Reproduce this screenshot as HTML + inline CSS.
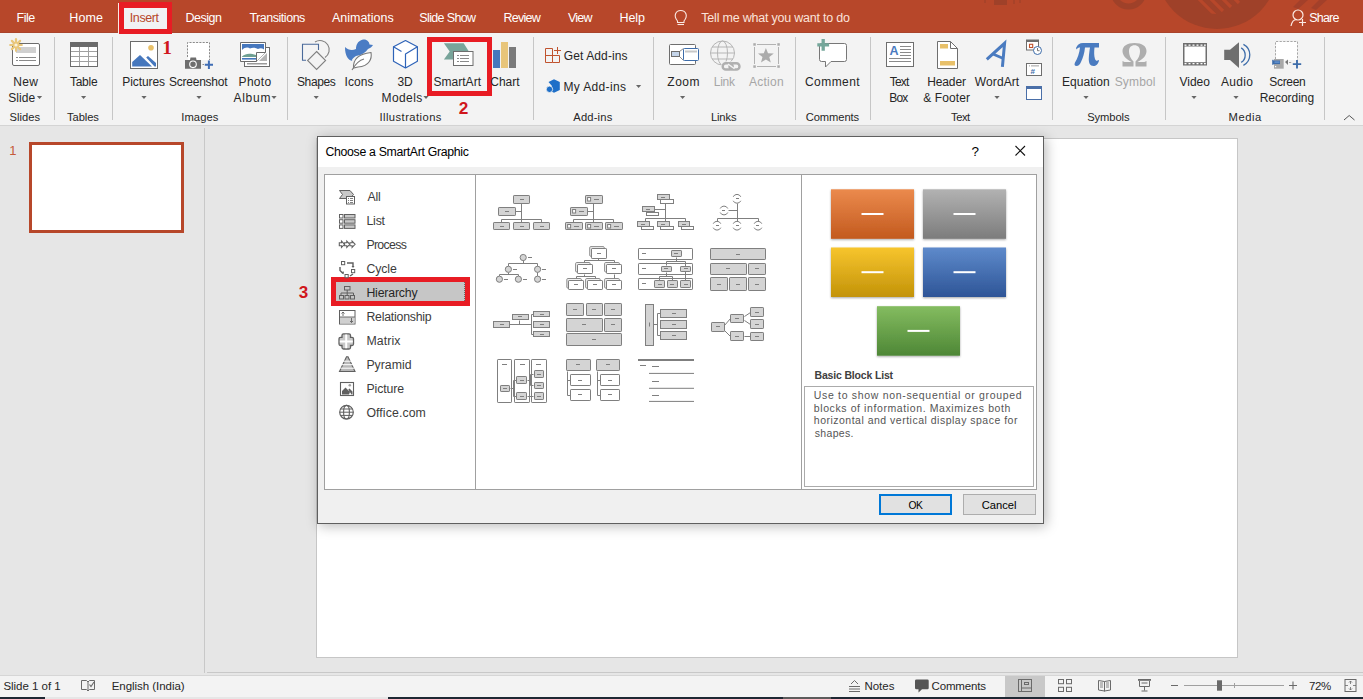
<!DOCTYPE html>
<html><head><meta charset="utf-8">
<style>
*{margin:0;padding:0;box-sizing:border-box}
html,body{width:1363px;height:699px;overflow:hidden;background:#E6E6E6;font-family:"Liberation Sans",sans-serif;position:relative}
.a{position:absolute}
.tx{position:absolute;white-space:nowrap;line-height:normal;font-family:"Liberation Sans",sans-serif}
</style></head><body>
<!-- base layers -->
<div class="a" style="left:0;top:0;width:1363px;height:33px;background:#B7472A;border-bottom:1px solid #A9432B"></div>
<div class="a" style="left:0;top:33px;width:1363px;height:92px;background:#F3F3F3"></div>
<div class="a" style="left:0;top:125px;width:1363px;height:1px;background:#D4D4D4"></div>
<!-- Insert tab highlight -->
<div class="a" style="left:119px;top:2px;width:53px;height:32px;background:#E81C24"></div>
<div class="a" style="left:124px;top:8px;width:43px;height:21px;background:#F1F2F4"></div>
<!-- SmartArt red box -->
<div class="a" style="left:427px;top:37px;width:65px;height:59px;border:5px solid #E81C24"></div>
<!-- separators -->
<div class="a" style="left:54px;top:37px;width:1px;height:83px;background:#C6C6C6"></div>
<div class="a" style="left:112px;top:37px;width:1px;height:83px;background:#C6C6C6"></div>
<div class="a" style="left:287px;top:37px;width:1px;height:83px;background:#C6C6C6"></div>
<div class="a" style="left:533px;top:37px;width:1px;height:83px;background:#C6C6C6"></div>
<div class="a" style="left:653px;top:37px;width:1px;height:83px;background:#C6C6C6"></div>
<div class="a" style="left:795px;top:37px;width:1px;height:83px;background:#C6C6C6"></div>
<div class="a" style="left:870px;top:37px;width:1px;height:83px;background:#C6C6C6"></div>
<div class="a" style="left:1052px;top:37px;width:1px;height:83px;background:#C6C6C6"></div>
<div class="a" style="left:1165px;top:37px;width:1px;height:83px;background:#C6C6C6"></div>
<div class="a" style="left:1324px;top:37px;width:1px;height:83px;background:#C6C6C6"></div>
<svg class="a" style="left:0;top:0" width="1363" height="125" viewBox="0 0 1363 125">
<!-- title pattern -->
<defs><clipPath id="ic"><circle cx="1217" cy="-32" r="46"/></clipPath></defs>
<circle cx="1217" cy="-32" r="61" fill="#9F4129"/>
<g clip-path="url(#ic)" stroke="#B7472A" stroke-width="3.2">
<line x1="1160" y1="-40" x2="1215" y2="15"/><line x1="1168" y1="-44" x2="1223" y2="11"/><line x1="1176" y1="-48" x2="1231" y2="7"/><line x1="1184" y1="-52" x2="1239" y2="3"/><line x1="1192" y1="-56" x2="1247" y2="-1"/><line x1="1200" y1="-60" x2="1255" y2="-5"/>
</g>
<circle cx="1128.5" cy="-8.5" r="15" fill="none" stroke="#9F4129" stroke-width="6"/>
<g fill="#9F4129"><rect x="994" y="0" width="13" height="5"/><rect x="984" y="0" width="2" height="3" opacity="0.6"/><rect x="1013" y="0" width="2" height="4" opacity="0.6"/><rect x="1019" y="0" width="2" height="3" opacity="0.6"/></g>
<path d="M1302 -2 L1308 0 L1298 9 L1293 7 Z" fill="#A3402A"/>
<path d="M1321 -2 L1327 0 L1316 10 L1311 8 Z" fill="#A3402A"/>
<!-- tab left white line -->
<rect x="118" y="3" width="1" height="30" fill="#F8E8E2"/>
<!-- bulb -->
<g fill="none" stroke="#FBE9E3" stroke-width="1.1">
<path d="M677.5 21 C675 18 675 15.5 675.5 14 C676.5 11 679 10.5 680.7 10.5 C682.5 10.5 685 11 686 14 C686.5 15.5 686.5 18 684 21 L684 22.5 L677.5 22.5 Z"/>
<line x1="677.5" y1="24.5" x2="684" y2="24.5"/>
</g>
<!-- share icon -->
<g fill="none" stroke="#FBE9E3" stroke-width="1.2">
<circle cx="1298" cy="15" r="5"/>
<path d="M1291 26 C1292 21 1294.5 19.5 1296.5 19.5"/>
<path d="M1302.5 19 L1302.5 26 M1299 22.5 L1306 22.5"/>
</g>

<!-- New slide -->
<g>
<rect x="12.5" y="43.5" width="27" height="22" rx="1.5" fill="#fff" stroke="#6B6B6B" stroke-width="1"/>
<rect x="16" y="47" width="20" height="6" fill="#D0D0D0"/>
<rect x="16" y="57" width="2" height="1" fill="#8A8A8A"/><rect x="19" y="57" width="17" height="1" fill="#8A8A8A"/>
<rect x="16" y="60" width="2" height="1" fill="#8A8A8A"/><rect x="19" y="60" width="17" height="1" fill="#8A8A8A"/>
<g stroke="#E9C77B" stroke-width="2.2" stroke-linecap="round">
<line x1="16" y1="39.2" x2="16" y2="50.8"/><line x1="10.2" y1="45" x2="21.8" y2="45"/><line x1="11.9" y1="40.9" x2="20.1" y2="49.1"/><line x1="20.1" y1="40.9" x2="11.9" y2="49.1"/>
</g>
<circle cx="16" cy="45" r="3" fill="#E9C77B"/>
<circle cx="16" cy="45" r="1.6" fill="#FBF3DE"/>
</g>
<!-- Table -->
<g>
<rect x="70.5" y="42.5" width="27" height="24" fill="#fff" stroke="#6B6B6B"/>
<rect x="70" y="42" width="28" height="5" fill="#6B6B6B"/>
<g stroke="#A0A0A0" stroke-width="1"><line x1="79.5" y1="47" x2="79.5" y2="66"/><line x1="88.5" y1="47" x2="88.5" y2="66"/>
<line x1="71" y1="51.5" x2="97" y2="51.5"/><line x1="71" y1="56.5" x2="97" y2="56.5"/><line x1="71" y1="61.5" x2="97" y2="61.5"/></g>
</g>
<!-- Pictures -->
<g>
<rect x="130.5" y="41.5" width="27" height="27" fill="#fff" stroke="#6B6B6B"/>
<circle cx="151" cy="47.8" r="2.8" fill="#E8C069"/>
<path d="M132.2 66.5 L132.2 62 L140 55 L152 66.5 Z" fill="#4677BD"/>
<path d="M146.2 57.5 L148 56 L156 63 L156 66.5 L154.5 66.5 Z" fill="#4677BD"/>
</g>
<!-- Screenshot -->
<g>
<rect x="188" y="43" width="21" height="17" fill="#fff"/><path d="M187.5 57 L187.5 42.5 L209.5 42.5 L209.5 60" fill="none" stroke="#8A8A8A" stroke-dasharray="2 1.3"/>
<path d="M185 60 L190 60 L190.5 57.5 L196 57.5 L196.5 60 L201 60 L201 68.7 L185 68.7 Z" fill="#6E6E6E"/>
<circle cx="193" cy="64.3" r="3.3" fill="none" stroke="#fff" stroke-width="1.1"/>
<rect x="202.5" y="64" width="1.5" height="1" fill="#8A8A8A"/>
<path d="M208.9 60.5 L208.9 69 M204.8 64.75 L213 64.75" stroke="#3F6DB5" stroke-width="2"/>
</g>
<!-- Photo album -->
<g>
<rect x="244.5" y="47.5" width="25" height="19" fill="#fff" stroke="#6B6B6B"/>
<rect x="247" y="63" width="20" height="1.5" fill="#9A9A9A"/>
<path d="M259 61 L267 53 L267 61 Z" fill="#B4B4B4"/>
<path d="M240.5 42.5 L265.5 42.5 L265.5 52.5 L256.5 61.5 L240.5 61.5 Z" fill="#fff" stroke="#6B6B6B"/>
<rect x="242" y="44" width="22" height="6" fill="#4677BD"/>
<path d="M242 50 C245 47 248 47 250 48.5 C253 47 256 48 258 49 C260 48 262 48 264 49.5 L264 51 L242 51 Z" fill="#fff"/>
<path d="M242 56.5 C246 53 250 53 256 55 L256 57 L242 57 Z" fill="#6FA092"/>
<rect x="242" y="58" width="14" height="1.6" fill="#4677BD"/>
<path d="M256.5 61.5 L256.5 52.5 L265.5 52.5" fill="#fff" stroke="#6B6B6B"/>
</g>
<!-- Shapes -->
<g fill="none" stroke-width="1.1">
<path d="M318.5 50 L318.5 44.2 L302.5 44.2 L302.5 60.2 L306 60.2" stroke="#4A6A9A"/>
<path d="M315 42 A8 8 0 1 1 325 57.5" stroke="#808080"/>
<path d="M316.6 51.5 L325.6 60.5 L316.6 69.5 L307.6 60.5 Z" stroke="#808080"/>
</g>
<!-- Icons -->
<g>
<path d="M345 47 C348 50 352 51 356 49 C356 46 357 41 363 39.5 C367 39 369.5 42 369.5 44.5 L373 45 C372 47 370 48 368 49 C366 52 362 55 356 56 C353 58 351 60 352.5 61 C348 60 345 56 345 47 Z" fill="#4A7CC4"/>
<path d="M353.5 68 C353 60 358 54 371 52.5 C372 58 370 66 358 67 Z" fill="#fff" stroke="#7A7A7A" stroke-width="1.1"/>
<path d="M352 70 C356 63 360 60 364 59" fill="none" stroke="#7A7A7A" stroke-width="1.1"/>
</g>
<!-- 3D -->
<g fill="#fff" stroke="#2E63B8" stroke-width="1.2" stroke-linejoin="round">
<path d="M405.5 40.5 L417.4 46.8 L417.4 61.3 L405.5 68 L393.5 61.3 L393.5 46.8 Z"/>
<path d="M417.4 46.8 L405.5 54 L405.5 68 M393.5 46.8 L401.5 51.5" fill="none"/>
</g>
<!-- SmartArt -->
<g>
<path d="M443.9 43.2 L463.7 43.2 L468.9 51.5 L463.7 59.5 L443.9 59.5 L449.7 51.5 Z" fill="#78A49A"/>
<rect x="453.5" y="51.5" width="19.5" height="14" fill="#fff" stroke="#6E6E6E"/>
<g fill="#8A8A8A"><rect x="457" y="55" width="2" height="1"/><rect x="460" y="55" width="9" height="1"/><rect x="457" y="58" width="2" height="1"/><rect x="460" y="58" width="9" height="1"/><rect x="457" y="61" width="2" height="1"/><rect x="460" y="61" width="9" height="1"/></g>
</g>
<!-- Chart -->
<rect x="493" y="50" width="7" height="18" fill="#4677BD"/>
<rect x="501" y="42" width="7" height="26" fill="#E8C57A"/>
<rect x="509" y="47" width="7" height="21" fill="#7A7A7A"/>
<!-- Get add-ins -->
<g fill="none" stroke="#C0532E" stroke-width="1">
<path d="M545.5 48.5 L552.5 48.5 L552.5 62.5 L545.5 62.5 Z M545.5 55.5 L559.5 55.5 L559.5 62.5 L552.5 62.5"/>
<path d="M557.5 47 L557.5 54 M554 50.5 L561 50.5"/>
</g>
<!-- My add-ins -->
<path d="M548.5 82 L554 79.3 L559.8 82 L559.8 90 L554 92.7 L552 91.8 L552 86 Z" fill="#1E6FC8"/>
<circle cx="549.5" cy="89.3" r="3.2" fill="#1E6FC8" stroke="#F3F3F3" stroke-width="0.8"/>
<!-- Zoom -->
<g>
<rect x="669.5" y="44.5" width="26" height="20" rx="1" fill="#fff" stroke="#6E6E6E"/>
<rect x="671.5" y="51.5" width="8" height="5" fill="#C5D5EA" stroke="#6E6E6E"/>
<path d="M679.5 51.5 L683.5 48.5 M679.5 56.5 L683.5 60.5" stroke="#6E6E6E" stroke-width="0.8"/>
<rect x="683.5" y="48.5" width="15" height="12" rx="1" fill="#fff" stroke="#3E6DAA"/>
<rect x="685" y="50.5" width="12" height="2" fill="#C8C8C8"/>
</g>
<!-- Link -->
<g fill="none" stroke="#B5B5B5" stroke-width="1">
<circle cx="722.5" cy="53" r="12"/>
<ellipse cx="722.5" cy="53" rx="5" ry="12"/>
<line x1="710.5" y1="53" x2="734.5" y2="53"/>
<path d="M712 47 L733 47 M712 59 L733 59"/>
</g>
<rect x="721" y="61.5" width="21" height="10" rx="5" fill="#F3F3F3"/>
<g fill="none" stroke="#B0B0B0" stroke-width="2.4"><rect x="722.7" y="63.3" width="10" height="6.2" rx="3.1"/><rect x="729.5" y="63.3" width="10" height="6.2" rx="3.1"/></g>
<path d="M728 64 L734.5 68.8" stroke="#F3F3F3" stroke-width="1.2"/>
<!-- Action -->
<g fill="#ABABAB">
<rect x="753.3" y="43.2" width="2.5" height="2.5"/><rect x="777.3" y="43.2" width="2.5" height="2.5"/><rect x="753.3" y="65.3" width="2.5" height="2.5"/><rect x="777.3" y="65.3" width="2.5" height="2.5"/>
<rect x="757" y="44" width="19" height="0.9"/><rect x="757" y="66" width="19" height="0.9"/><rect x="754" y="47" width="0.9" height="17"/><rect x="778" y="47" width="0.9" height="17"/>
<path d="M765.9 48 L768 53.3 L773.8 53.5 L769.3 57 L770.8 62.5 L765.9 59.4 L761 62.5 L762.5 57 L758 53.5 L763.8 53.3 Z"/>
</g>
<!-- Comment -->
<g>
<path d="M821.5 43.5 L844.5 43.5 Q846.5 43.5 846.5 45.5 L846.5 59.5 Q846.5 61.5 844.5 61.5 L831 61.5 L825.5 67 L825.5 61.5 L821.5 61.5 Q819.5 61.5 819.5 59.5 L819.5 45.5 Q819.5 43.5 821.5 43.5 Z" fill="#fff" stroke="#777" stroke-width="1"/>
<path d="M823.2 39 L823.2 50.7 M817.3 44.8 L829.1 44.8" stroke="#75A79B" stroke-width="3.3"/>
</g>
<!-- Text box -->
<g>
<rect x="886.5" y="42.5" width="27" height="24" fill="#fff" stroke="#6E6E6E"/>
<text x="889.5" y="55.3" font-family="Liberation Sans" font-size="12.5" font-weight="bold" fill="#4A7BC0">A</text>
<g fill="#8A8A8A"><rect x="900" y="46" width="11" height="1"/><rect x="900" y="49" width="11" height="1"/><rect x="900" y="52" width="11" height="1"/><rect x="900" y="55" width="11" height="1"/><rect x="889" y="58" width="22" height="1"/><rect x="889" y="61" width="22" height="1"/></g>
</g>
<!-- Header footer -->
<g>
<path d="M937.5 41.5 L950.5 41.5 L957.5 48.5 L957.5 68.5 L937.5 68.5 Z" fill="#fff" stroke="#6E6E6E"/>
<path d="M950.5 41.5 L950.5 48.5 L957.5 48.5" fill="none" stroke="#6E6E6E"/>
<rect x="940" y="44" width="8" height="4.5" fill="#E8C069"/>
<rect x="940" y="61" width="15" height="4.5" fill="#E8C069"/>
</g>
<!-- WordArt -->
<path d="M986.8 59.4 L1004.6 43.3 L1002.4 66.8" fill="none" stroke="#4A7BC0" stroke-width="3" stroke-linejoin="miter"/><path d="M993.5 54.3 L1002.8 58.2" stroke="#4A7BC0" stroke-width="2.8"/>
<!-- small text icons -->
<g>
<rect x="1026.5" y="40.5" width="12" height="9.5" fill="#fff" stroke="#6E6E6E"/>
<rect x="1026" y="39.5" width="13" height="2.5" fill="#6E6E6E"/>
<rect x="1029.5" y="44.3" width="3.2" height="3.2" fill="#fff" stroke="#C0532E" stroke-width="1.1"/>
<circle cx="1037.5" cy="50.5" r="4" fill="#fff" stroke="#3E6DAA" stroke-width="1"/>
<path d="M1037.5 48 L1037.5 50.7 L1039.5 50.7" fill="none" stroke="#555" stroke-width="0.8"/>
<rect x="1026.5" y="63.5" width="15" height="12" fill="#fff" stroke="#6E6E6E"/>
<rect x="1029" y="65.5" width="1" height="0.8" fill="#888"/><rect x="1031" y="65.5" width="8" height="0.8" fill="#888"/>
<text x="1030.5" y="74" font-family="Liberation Sans" font-weight="bold" font-size="8" fill="#3E6DAA">#</text>
<rect x="1026.5" y="86.5" width="15" height="13" fill="#fff" stroke="#4A6FA8"/>
<rect x="1026" y="86" width="16" height="3" fill="#4A6FA8"/>
</g>
<!-- Pi / Omega -->
<path d="M1076 48 C1077.5 44.5 1079.5 43 1083 43 L1099 43 L1099 47.5 L1094.5 47.5 C1094 52 1094 56 1095 59 C1095.8 61 1097 61.3 1098.5 60 L1099 60.5 C1098 64.5 1096 66 1093.5 66 C1090 66 1088.5 63 1088.8 58 C1089 54 1089.5 50.5 1090 47.5 L1085 47.5 C1084.5 53 1083 58 1081 62 C1079.8 64.5 1078.5 66 1076.5 66 C1074.5 66 1074 64.5 1075 62.5 C1077.5 58.5 1079.5 53 1080 47.5 C1078.5 47.5 1077.5 48 1076.6 49.5 Z" fill="#4A7BC0"/>
<path d="M1122.5 66.5 L1122.5 61 L1124.5 62 L1131.5 62 C1125.5 59 1122.5 55 1122.5 51 C1122.5 46 1127 43 1134.5 43 C1142 43 1146.5 46 1146.5 51 C1146.5 55 1143.5 59 1137.5 62 L1144.5 62 L1146.5 61 L1146.5 66.5 L1135.5 66.5 L1135.5 61.5 C1138.5 58.5 1140 55 1140 51.5 C1140 47.5 1138 45.3 1134.5 45.3 C1131 45.3 1129 47.5 1129 51.5 C1129 55 1130.5 58.5 1133.5 61.5 L1133.5 66.5 Z" fill="#AEAEAE"/>
<!-- Video -->
<g>
<rect x="1183" y="43" width="24" height="22.5" fill="#6E6E6E"/>
<rect x="1184.5" y="46.5" width="21" height="15.7" fill="#fff"/>
<g fill="#fff"><rect x="1184.5" y="44.5" width="2" height="1.3"/><rect x="1188.5" y="44.5" width="2" height="1.3"/><rect x="1192.5" y="44.5" width="2" height="1.3"/><rect x="1196.5" y="44.5" width="2" height="1.3"/><rect x="1200.5" y="44.5" width="2" height="1.3"/><rect x="1204" y="44.5" width="1.8" height="1.3"/>
<rect x="1184.5" y="63" width="2" height="1.3"/><rect x="1188.5" y="63" width="2" height="1.3"/><rect x="1192.5" y="63" width="2" height="1.3"/><rect x="1196.5" y="63" width="2" height="1.3"/><rect x="1200.5" y="63" width="2" height="1.3"/><rect x="1204" y="63" width="1.8" height="1.3"/></g>
</g>
<!-- Audio -->
<path d="M1224.2 49.8 L1230 49.8 L1239 42.2 L1239 68 L1230 59.9 L1224.2 59.9 Z" fill="#6E6E6E"/>
<path d="M1241.2 47.9 A8.6 8.6 0 0 1 1241.2 62.4 M1243.4 44.3 A11.9 11.9 0 0 1 1243.4 65.4" fill="none" stroke="#3E6DAA" stroke-width="1.3"/>
<!-- Screen rec -->
<g>
<rect x="1276" y="42" width="21" height="18" fill="#fff"/><path d="M1275.5 59 L1275.5 41.5 L1297.5 41.5 L1297.5 60" fill="none" stroke="#A8A8A8" stroke-dasharray="2.2 1.4"/>
<rect x="1274" y="59" width="9.7" height="9.7" fill="#A8A8A8"/>
<rect x="1275" y="66" width="1.2" height="1.2" fill="#fff"/>
<rect x="1273" y="60.5" width="7" height="3.6" fill="#3E6DAA"/>
<rect x="1272.2" y="59.8" width="1.3" height="5" fill="#3E6DAA"/>
<rect x="1274.5" y="61.5" width="5" height="1.2" fill="#6A9AD8"/>
<path d="M1285 62 L1288 59.5 L1288 65 Z" fill="#777"/>
<rect x="1289" y="62" width="2.2" height="0.9" fill="#999"/>
<path d="M1297 60 L1297 68.5 M1292.8 64.1 L1301.2 64.1" stroke="#3E6DAA" stroke-width="1.9"/>
</g>
<!-- collapse caret -->
<path d="M1344 120 L1349.2 115.5 L1354.5 120" fill="none" stroke="#555" stroke-width="1"/>
</svg>

<svg class="a" style="left:0;top:0" width="1363" height="125"><path d="M36.9 96 L42.1 96 L39.5 99 Z" fill="#666"/><path d="M81.0 96 L86.19999999999999 96 L83.6 99 Z" fill="#666"/><path d="M141.4 96 L146.6 96 L144 99 Z" fill="#666"/><path d="M196.4 96 L201.6 96 L199 99 Z" fill="#666"/><path d="M271.4 96 L276.6 96 L274 99 Z" fill="#666"/><path d="M313.59999999999997 96 L318.8 96 L316.2 99 Z" fill="#666"/><path d="M423.4 96 L428.6 96 L426 99 Z" fill="#666"/><path d="M636.0 85 L641.2 85 L638.6 88 Z" fill="#666"/><path d="M680.0 96 L685.2 96 L682.6 99 Z" fill="#666"/><path d="M994.4 96 L999.6 96 L997 99 Z" fill="#666"/><path d="M1083.4 96 L1088.6 96 L1086 99 Z" fill="#666"/><path d="M1191.4 96 L1196.6 96 L1194 99 Z" fill="#666"/><path d="M1233.4 96 L1238.6 96 L1236 99 Z" fill="#666"/></svg>
<!-- slides pane -->
<div class="a" style="left:204px;top:128px;width:1px;height:545px;background:#C8C8C8"></div>
<div class="a" style="left:207px;top:672px;width:1156px;height:1px;background:#C8C8C8"></div>
<div class="a" style="left:29px;top:142px;width:155px;height:91px;border:3px solid #B7472A;background:#fff"></div>
<!-- slide -->
<div class="a" style="left:316px;top:138px;width:922px;height:520px;background:#fff;border:1px solid #C6C6C6"></div>
<!-- status bar -->
<div class="a" style="left:0;top:675px;width:1363px;height:22px;background:#F3F3F3;border-top:1px solid #D6D6D6"></div>
<div class="a" style="left:1005px;top:676px;width:40px;height:21px;background:#C8C8C8"></div>
<div class="a" style="left:0;top:697px;width:45px;height:2px;background:#1E2833"></div>
<div class="a" style="left:388px;top:697px;width:975px;height:2px;background:#1E2833"></div>
<div class="a" style="left:783px;top:697px;width:48px;height:2px;background:#5C5C5C"></div>
<svg class="a" style="left:0;top:0" width="1363" height="699">
<g fill="none" stroke="#6A6A6A" stroke-width="1">
<!-- spell check book -->
<path d="M81.5 680.5 L86.5 680.5 L88 682 L88 691 L86.5 689.5 L81.5 689.5 Z M88 682 L89.5 680.5 L94.5 680.5 L94.5 689.5 L89.5 689.5 L88 691"/>
<path d="M89.5 684.5 L91 686.5 L94 682" stroke-width="1.1"/>
<!-- notes -->
<path d="M849 686.5 L860 686.5 M849 689 L860 689 M849 691.5 L860 691.5 M851 684 L854.5 680.5 L858 684"/>
<!-- normal -->
<rect x="1018.5" y="679.5" width="13" height="12"/>
<path d="M1021.5 679.5 L1021.5 691.5 M1021.5 688 L1031.5 688"/>
<rect x="1024.5" y="682.5" width="4" height="2"/>
<!-- sorter -->
<rect x="1058.5" y="679.5" width="5" height="4.2"/><rect x="1066.5" y="679.5" width="5" height="4.2"/>
<rect x="1058.5" y="687.3" width="5" height="4.2"/><rect x="1066.5" y="687.3" width="5" height="4.2"/>
<!-- reading -->
<path d="M1098.5 680.5 L1104.5 681.5 L1110.5 680.5 L1110.5 690 L1104.5 691 L1098.5 690 Z M1104.5 681.5 L1104.5 691.5"/>
<path d="M1100 683 h3 M1100 685 h3 M1100 687 h3 M1106 683 h3 M1106 685 h3 M1106 687 h3" stroke-width="0.8"/>
<!-- slideshow -->
<path d="M1139.5 681 L1139.5 686.5 L1149.5 686.5 L1149.5 681 M1144.5 686.5 L1144.5 690.5 M1141.5 691 L1147.5 691 M1141.5 683 L1147.5 683"/>
<!-- zoom slider -->
<path d="M1171 685.5 L1178 685.5 M1289 685.5 L1297 685.5 M1293 681.5 L1293 689.5" stroke-width="1.1"/>
<rect x="1345" y="679.5" width="11" height="12"/>
<path d="M1350.5 681 L1350.5 684 M1349 682.5 L1350.5 681 L1352 682.5 M1350.5 690 L1350.5 687 M1349 688.5 L1350.5 690 L1352 688.5 M1345 685.5 L1348 685.5 M1353 685.5 L1356 685.5" stroke-width="0.8"/>
</g>
<rect x="1138" y="679" width="13" height="1.8" fill="#6A6A6A"/>
<rect x="1184" y="685" width="100" height="1" fill="#A0A0A0"/>
<rect x="1234" y="683" width="1" height="5" fill="#A0A0A0"/>
<rect x="1217" y="680.3" width="5" height="10.4" fill="#6A6A6A"/>
<!-- comments bubble -->
<path d="M916.5 679.5 L927.5 679.5 Q928.7 679.5 928.7 680.7 L928.7 688 Q928.7 689.2 927.5 689.2 L922 689.2 L918.5 692.6 L918.5 689.2 L916.5 689.2 Q915 689.2 915 688 L915 680.7 Q915 679.5 916.5 679.5 Z" fill="#555"/>
</svg>

<!-- dialog -->
<div class="a" style="left:317px;top:136px;width:727px;height:388px;background:#F0F0F0;border:1px solid #5F5F5F;box-shadow:2px 2px 12px rgba(0,0,0,0.28)"></div>
<div class="a" style="left:318px;top:137px;width:725px;height:30px;background:#fff"></div>
<div class="a" style="left:324px;top:174px;width:713px;height:316px;background:#fff;border:1px solid #A0A0A0"></div>
<div class="a" style="left:475px;top:175px;width:1px;height:314px;background:#A0A0A0"></div>
<div class="a" style="left:801px;top:175px;width:1px;height:314px;background:#A0A0A0"></div>
<!-- hierarchy selection -->
<div class="a" style="left:331px;top:277px;width:139px;height:29px;background:#E81C24"></div>
<div class="a" style="left:336px;top:282px;width:129px;height:19px;background:#C6C6C6"></div>
<div class="a" style="left:464px;top:282px;width:1px;height:19px;border-left:1px dotted #6A6A6A"></div>
<!-- description box -->
<div class="a" style="left:804px;top:386px;width:230px;height:101px;background:#fff;border:1px solid #ABABAB"></div>
<!-- buttons -->
<div class="a" style="left:879px;top:494px;width:73px;height:21px;background:#E1E1E1;border:2px solid #0078D7"></div>
<div class="a" style="left:963px;top:494px;width:73px;height:21px;background:#E1E1E1;border:1px solid #ADADAD"></div>
<svg class="a" style="left:0;top:0" width="1363" height="699"><defs>
<linearGradient id="go" x1="0" y1="0" x2="0" y2="1"><stop offset="0" stop-color="#EB8A4D"/><stop offset="1" stop-color="#C35A1E"/></linearGradient>
<linearGradient id="gg" x1="0" y1="0" x2="0" y2="1"><stop offset="0" stop-color="#B2B2B2"/><stop offset="1" stop-color="#7C7C7C"/></linearGradient>
<linearGradient id="gy" x1="0" y1="0" x2="0" y2="1"><stop offset="0" stop-color="#F7C52E"/><stop offset="1" stop-color="#C39308"/></linearGradient>
<linearGradient id="gb" x1="0" y1="0" x2="0" y2="1"><stop offset="0" stop-color="#5E8ACB"/><stop offset="1" stop-color="#2E5597"/></linearGradient>
<linearGradient id="gn" x1="0" y1="0" x2="0" y2="1"><stop offset="0" stop-color="#84BC60"/><stop offset="1" stop-color="#4E8736"/></linearGradient>
<filter id="sh" x="-10%" y="-10%" width="120%" height="130%"><feDropShadow dx="0" dy="1" stdDeviation="0.8" flood-color="#000" flood-opacity="0.35"/></filter>
</defs>
<path d="M521.5 203.5 L521.5 222.5" fill="none" stroke="#7F7F7F" stroke-width="1"/>
<path d="M501.5 222.5 L501.5 219.5 L541.5 219.5 L541.5 222.5" fill="none" stroke="#7F7F7F" stroke-width="1"/>
<path d="M515.5 211.5 L521.5 211.5" fill="none" stroke="#7F7F7F" stroke-width="1"/>
<rect x="513.5" y="195.5" width="16.0" height="8.0" rx="0.6" fill="#D4D4D4" stroke="#7F7F7F" stroke-width="1"/>
<rect x="520" y="199" width="4" height="1" fill="#7F7F7F"/>
<rect x="498.5" y="207.5" width="17.0" height="8.0" rx="0.6" fill="#D4D4D4" stroke="#7F7F7F" stroke-width="1"/>
<rect x="505" y="211" width="4" height="1" fill="#7F7F7F"/>
<rect x="493.5" y="222.5" width="16.0" height="7.0" rx="0.6" fill="#D4D4D4" stroke="#7F7F7F" stroke-width="1"/>
<rect x="500" y="226" width="4" height="1" fill="#7F7F7F"/>
<rect x="513.5" y="222.5" width="16.0" height="7.0" rx="0.6" fill="#D4D4D4" stroke="#7F7F7F" stroke-width="1"/>
<rect x="520" y="226" width="4" height="1" fill="#7F7F7F"/>
<rect x="533.5" y="222.5" width="16.0" height="7.0" rx="0.6" fill="#D4D4D4" stroke="#7F7F7F" stroke-width="1"/>
<rect x="540" y="226" width="4" height="1" fill="#7F7F7F"/>
<path d="M593.5 203.5 L593.5 222.5" fill="none" stroke="#7F7F7F" stroke-width="1"/>
<path d="M573.5 222.5 L573.5 219.5 L613.5 219.5 L613.5 222.5" fill="none" stroke="#7F7F7F" stroke-width="1"/>
<path d="M587.5 211.5 L593.5 211.5" fill="none" stroke="#7F7F7F" stroke-width="1"/>
<rect x="585.5" y="195.5" width="17.0" height="8.0" rx="0.6" fill="#D4D4D4" stroke="#7F7F7F" stroke-width="1"/>
<rect x="587.6" y="197.5" width="3" height="3.5" fill="#fff" stroke="#7F7F7F" stroke-width="1"/>
<rect x="594" y="199" width="5" height="1" fill="#7F7F7F"/>
<rect x="570.5" y="207.5" width="17.0" height="8.0" rx="0.6" fill="#D4D4D4" stroke="#7F7F7F" stroke-width="1"/>
<rect x="572.6" y="209.5" width="3" height="3.5" fill="#fff" stroke="#7F7F7F" stroke-width="1"/>
<rect x="579" y="211" width="5" height="1" fill="#7F7F7F"/>
<rect x="565.5" y="222.5" width="17.0" height="7.0" rx="0.6" fill="#D4D4D4" stroke="#7F7F7F" stroke-width="1"/>
<rect x="567.6" y="224.5" width="3" height="3.5" fill="#fff" stroke="#7F7F7F" stroke-width="1"/>
<rect x="574" y="226" width="5" height="1" fill="#7F7F7F"/>
<rect x="585.5" y="222.5" width="17.0" height="7.0" rx="0.6" fill="#D4D4D4" stroke="#7F7F7F" stroke-width="1"/>
<rect x="587.6" y="224.5" width="3" height="3.5" fill="#fff" stroke="#7F7F7F" stroke-width="1"/>
<rect x="594" y="226" width="5" height="1" fill="#7F7F7F"/>
<rect x="605.5" y="222.5" width="17.0" height="7.0" rx="0.6" fill="#D4D4D4" stroke="#7F7F7F" stroke-width="1"/>
<rect x="607.6" y="224.5" width="3" height="3.5" fill="#fff" stroke="#7F7F7F" stroke-width="1"/>
<rect x="614" y="226" width="5" height="1" fill="#7F7F7F"/>
<path d="M665.5 203.5 L665.5 221.5" fill="none" stroke="#7F7F7F" stroke-width="1"/>
<path d="M645.5 221.5 L645.5 218.5 L685.5 218.5 L685.5 221.5" fill="none" stroke="#7F7F7F" stroke-width="1"/>
<path d="M654.5 209.5 L665.5 209.5" fill="none" stroke="#7F7F7F" stroke-width="1"/>
<rect x="657.5" y="194.5" width="12.0" height="5.0" rx="0" fill="#D4D4D4" stroke="#7F7F7F" stroke-width="1"/>
<rect x="661" y="197" width="4" height="1" fill="#7F7F7F"/>
<rect x="660.5" y="199.5" width="13.0" height="4.0" rx="0" fill="#fff" stroke="#7F7F7F" stroke-width="1"/>
<rect x="642.5" y="206.5" width="12.0" height="5.0" rx="0" fill="#D4D4D4" stroke="#7F7F7F" stroke-width="1"/>
<rect x="646" y="209" width="4" height="1" fill="#7F7F7F"/>
<rect x="646.5" y="212.5" width="12.0" height="3.0" rx="0" fill="#fff" stroke="#7F7F7F" stroke-width="1"/>
<rect x="637.5" y="221.5" width="12.0" height="5.0" rx="0" fill="#D4D4D4" stroke="#7F7F7F" stroke-width="1"/>
<rect x="641" y="224" width="4" height="1" fill="#7F7F7F"/>
<rect x="641.5" y="226.5" width="12.0" height="3.0" rx="0" fill="#fff" stroke="#7F7F7F" stroke-width="1"/>
<rect x="657.5" y="221.5" width="12.0" height="5.0" rx="0" fill="#D4D4D4" stroke="#7F7F7F" stroke-width="1"/>
<rect x="661" y="224" width="4" height="1" fill="#7F7F7F"/>
<rect x="660.5" y="226.5" width="13.0" height="3.0" rx="0" fill="#fff" stroke="#7F7F7F" stroke-width="1"/>
<rect x="678.5" y="221.5" width="11.0" height="5.0" rx="0" fill="#D4D4D4" stroke="#7F7F7F" stroke-width="1"/>
<rect x="682" y="224" width="4" height="1" fill="#7F7F7F"/>
<rect x="681.5" y="226.5" width="12.0" height="3.0" rx="0" fill="#fff" stroke="#7F7F7F" stroke-width="1"/>
<path d="M737.5 203.5 L737.5 221.5" fill="none" stroke="#7F7F7F" stroke-width="1"/>
<path d="M717.5 221.5 L717.5 218.5 L758.5 218.5 L758.5 221.5" fill="none" stroke="#7F7F7F" stroke-width="1"/>
<path d="M728.5 210.5 L737.5 210.5" fill="none" stroke="#7F7F7F" stroke-width="1"/>
<path d="M733.2 196.8 A4.2 4.2 0 0 1 740.8 196.8 M733.2 200.8 A4.2 4.2 0 0 0 740.8 200.8" fill="none" stroke="#7F7F7F" stroke-width="1"/>
<rect x="736" y="198" width="3" height="1" fill="#7F7F7F"/>
<path d="M720.2 208.5 A4.2 4.2 0 0 1 727.8 208.5 M720.2 212.5 A4.2 4.2 0 0 0 727.8 212.5" fill="none" stroke="#7F7F7F" stroke-width="1"/>
<rect x="722" y="210" width="3" height="1" fill="#7F7F7F"/>
<path d="M713.2 223.7 A4.2 4.2 0 0 1 720.8 223.7 M713.2 227.7 A4.2 4.2 0 0 0 720.8 227.7" fill="none" stroke="#7F7F7F" stroke-width="1"/>
<rect x="716" y="225" width="3" height="1" fill="#7F7F7F"/>
<path d="M733.2 223.7 A4.2 4.2 0 0 1 740.8 223.7 M733.2 227.7 A4.2 4.2 0 0 0 740.8 227.7" fill="none" stroke="#7F7F7F" stroke-width="1"/>
<rect x="736" y="225" width="3" height="1" fill="#7F7F7F"/>
<path d="M754.2 223.7 A4.2 4.2 0 0 1 761.8 223.7 M754.2 227.7 A4.2 4.2 0 0 0 761.8 227.7" fill="none" stroke="#7F7F7F" stroke-width="1"/>
<rect x="756" y="225" width="3" height="1" fill="#7F7F7F"/>
<path d="M523.5 260.5 L523.5 263.5" fill="none" stroke="#7F7F7F" stroke-width="1"/>
<path d="M508.5 266.5 L508.5 263.5 L537.5 263.5 L537.5 276.5" fill="none" stroke="#7F7F7F" stroke-width="1"/>
<path d="M508.5 272.5 L508.5 274.5" fill="none" stroke="#7F7F7F" stroke-width="1"/>
<path d="M499.5 276.5 L499.5 274.5 L518.5 274.5 L518.5 276.5" fill="none" stroke="#7F7F7F" stroke-width="1"/>
<circle cx="523.2" cy="257.5" r="3.1" fill="#D4D4D4" stroke="#7F7F7F" stroke-width="1"/>
<rect x="528" y="257" width="4" height="1" fill="#7F7F7F"/>
<circle cx="508.4" cy="269.3" r="3.1" fill="#D4D4D4" stroke="#7F7F7F" stroke-width="1"/>
<rect x="513" y="269" width="4" height="1" fill="#7F7F7F"/>
<circle cx="537.6" cy="269.3" r="3.1" fill="#D4D4D4" stroke="#7F7F7F" stroke-width="1"/>
<rect x="542" y="269" width="4" height="1" fill="#7F7F7F"/>
<circle cx="499.4" cy="279.2" r="3.1" fill="#D4D4D4" stroke="#7F7F7F" stroke-width="1"/>
<rect x="504" y="279" width="4" height="1" fill="#7F7F7F"/>
<circle cx="518.4" cy="279.2" r="3.1" fill="#D4D4D4" stroke="#7F7F7F" stroke-width="1"/>
<rect x="523" y="279" width="4" height="1" fill="#7F7F7F"/>
<circle cx="537.6" cy="279.2" r="3.1" fill="#D4D4D4" stroke="#7F7F7F" stroke-width="1"/>
<rect x="542" y="279" width="4" height="1" fill="#7F7F7F"/>
<path d="M598.5 258.5 L598.5 260.5" fill="none" stroke="#7F7F7F" stroke-width="1"/>
<path d="M584.5 264.5 L584.5 260.5 L614.5 260.5 L614.5 264.5" fill="none" stroke="#7F7F7F" stroke-width="1"/>
<path d="M584.5 274.5 L584.5 276.5" fill="none" stroke="#7F7F7F" stroke-width="1"/>
<path d="M576.5 280.5 L576.5 276.5 L595.5 276.5 L595.5 280.5" fill="none" stroke="#7F7F7F" stroke-width="1"/>
<path d="M614.5 274.5 L614.5 280.5" fill="none" stroke="#7F7F7F" stroke-width="1"/>
<rect x="589.8" y="246.7" width="14.4" height="9.5" rx="0.8" fill="#fff" stroke="#7F7F7F" stroke-width="1"/>
<rect x="591.5" y="248.5" width="15.0" height="10.0" rx="0.6" fill="#fff" stroke="#7F7F7F" stroke-width="1"/>
<rect x="597" y="253" width="4" height="1" fill="#7F7F7F"/>
<rect x="575.7" y="262.6" width="14.4" height="9.3" rx="0.8" fill="#fff" stroke="#7F7F7F" stroke-width="1"/>
<rect x="577.5" y="264.5" width="15.0" height="9.0" rx="0.6" fill="#fff" stroke="#7F7F7F" stroke-width="1"/>
<rect x="583" y="268" width="4" height="1" fill="#7F7F7F"/>
<rect x="604.7" y="262.6" width="14.6" height="9.3" rx="0.8" fill="#fff" stroke="#7F7F7F" stroke-width="1"/>
<rect x="606.5" y="264.5" width="15.0" height="9.0" rx="0.6" fill="#fff" stroke="#7F7F7F" stroke-width="1"/>
<rect x="612" y="268" width="4" height="1" fill="#7F7F7F"/>
<rect x="566.9" y="278.6" width="14.4" height="9.4" rx="0.8" fill="#fff" stroke="#7F7F7F" stroke-width="1"/>
<rect x="568.5" y="280.5" width="15.0" height="9.0" rx="0.6" fill="#fff" stroke="#7F7F7F" stroke-width="1"/>
<rect x="574" y="284" width="4" height="1" fill="#7F7F7F"/>
<rect x="585.7" y="278.6" width="14.4" height="9.4" rx="0.8" fill="#fff" stroke="#7F7F7F" stroke-width="1"/>
<rect x="587.5" y="280.5" width="15.0" height="9.0" rx="0.6" fill="#fff" stroke="#7F7F7F" stroke-width="1"/>
<rect x="593" y="284" width="4" height="1" fill="#7F7F7F"/>
<rect x="604.7" y="278.6" width="14.6" height="9.4" rx="0.8" fill="#fff" stroke="#7F7F7F" stroke-width="1"/>
<rect x="606.5" y="280.5" width="15.0" height="9.0" rx="0.6" fill="#fff" stroke="#7F7F7F" stroke-width="1"/>
<rect x="612" y="284" width="4" height="1" fill="#7F7F7F"/>
<rect x="638.5" y="248.5" width="54.0" height="11.0" rx="0.6" fill="#fff" stroke="#7F7F7F" stroke-width="1"/>
<rect x="642" y="253" width="4" height="1" fill="#7F7F7F"/>
<rect x="638.5" y="263.5" width="54.0" height="11.0" rx="0.6" fill="#fff" stroke="#7F7F7F" stroke-width="1"/>
<rect x="642" y="268" width="4" height="1" fill="#7F7F7F"/>
<rect x="638.5" y="278.5" width="54.0" height="11.0" rx="0.6" fill="#fff" stroke="#7F7F7F" stroke-width="1"/>
<rect x="642" y="283" width="4" height="1" fill="#7F7F7F"/>
<path d="M676.5 257.5 L676.5 261.5" fill="none" stroke="#7F7F7F" stroke-width="1"/>
<path d="M666.5 265.5 L666.5 261.5 L685.5 261.5 L685.5 280.5" fill="none" stroke="#7F7F7F" stroke-width="1"/>
<path d="M666.5 272.5 L666.5 276.5" fill="none" stroke="#7F7F7F" stroke-width="1"/>
<path d="M659.5 280.5 L659.5 276.5 L672.5 276.5 L672.5 280.5" fill="none" stroke="#7F7F7F" stroke-width="1"/>
<rect x="671.5" y="250.5" width="10.0" height="6.0" rx="0.6" fill="#D4D4D4" stroke="#7F7F7F" stroke-width="1"/>
<rect x="674" y="253" width="4" height="1" fill="#7F7F7F"/>
<rect x="661.5" y="266.5" width="10.0" height="5.0" rx="0.6" fill="#D4D4D4" stroke="#7F7F7F" stroke-width="1"/>
<rect x="664" y="268" width="4" height="1" fill="#7F7F7F"/>
<rect x="680.5" y="266.5" width="10.0" height="5.0" rx="0.6" fill="#D4D4D4" stroke="#7F7F7F" stroke-width="1"/>
<rect x="684" y="268" width="4" height="1" fill="#7F7F7F"/>
<rect x="654.5" y="280.5" width="10.0" height="7.0" rx="0.6" fill="#D4D4D4" stroke="#7F7F7F" stroke-width="1"/>
<rect x="658" y="284" width="4" height="1" fill="#7F7F7F"/>
<rect x="667.5" y="280.5" width="10.0" height="7.0" rx="0.6" fill="#D4D4D4" stroke="#7F7F7F" stroke-width="1"/>
<rect x="670" y="284" width="4" height="1" fill="#7F7F7F"/>
<rect x="680.5" y="280.5" width="10.0" height="7.0" rx="0.6" fill="#D4D4D4" stroke="#7F7F7F" stroke-width="1"/>
<rect x="684" y="284" width="4" height="1" fill="#7F7F7F"/>
<rect x="710.5" y="248.5" width="55.0" height="11.0" rx="0.6" fill="#D4D4D4" stroke="#7F7F7F" stroke-width="1"/>
<rect x="736" y="254" width="4" height="1" fill="#7F7F7F"/>
<rect x="710.5" y="263.5" width="36.0" height="11.0" rx="0.6" fill="#D4D4D4" stroke="#7F7F7F" stroke-width="1"/>
<rect x="726" y="268" width="4" height="1" fill="#7F7F7F"/>
<rect x="748.5" y="263.5" width="17.0" height="11.0" rx="0.6" fill="#D4D4D4" stroke="#7F7F7F" stroke-width="1"/>
<rect x="755" y="268" width="4" height="1" fill="#7F7F7F"/>
<rect x="710.5" y="277.5" width="17.0" height="13.0" rx="0.6" fill="#D4D4D4" stroke="#7F7F7F" stroke-width="1"/>
<rect x="717" y="284" width="4" height="1" fill="#7F7F7F"/>
<rect x="729.5" y="277.5" width="17.0" height="13.0" rx="0.6" fill="#D4D4D4" stroke="#7F7F7F" stroke-width="1"/>
<rect x="736" y="284" width="4" height="1" fill="#7F7F7F"/>
<rect x="748.5" y="277.5" width="17.0" height="13.0" rx="0.6" fill="#D4D4D4" stroke="#7F7F7F" stroke-width="1"/>
<rect x="755" y="284" width="4" height="1" fill="#7F7F7F"/>
<path d="M509.5 324.5 L531.5 324.5" fill="none" stroke="#7F7F7F" stroke-width="1"/>
<path d="M519.5 320.5 L519.5 324.5" fill="none" stroke="#7F7F7F" stroke-width="1"/>
<path d="M533.5 314.5 L531.5 314.5 L531.5 334.5 L533.5 334.5" fill="none" stroke="#7F7F7F" stroke-width="1"/>
<rect x="493.5" y="321.5" width="16.0" height="6.0" rx="0" fill="#D4D4D4" stroke="#7F7F7F" stroke-width="1"/>
<rect x="500" y="324" width="4" height="1" fill="#7F7F7F"/>
<rect x="512.5" y="314.5" width="16.0" height="5.0" rx="0" fill="#D4D4D4" stroke="#7F7F7F" stroke-width="1"/>
<rect x="518" y="316" width="4" height="1" fill="#7F7F7F"/>
<rect x="533.5" y="311.5" width="16.0" height="5.0" rx="0" fill="#D4D4D4" stroke="#7F7F7F" stroke-width="1"/>
<rect x="540" y="314" width="4" height="1" fill="#7F7F7F"/>
<rect x="533.5" y="321.5" width="16.0" height="6.0" rx="0" fill="#D4D4D4" stroke="#7F7F7F" stroke-width="1"/>
<rect x="540" y="324" width="4" height="1" fill="#7F7F7F"/>
<rect x="533.5" y="331.5" width="16.0" height="5.0" rx="0" fill="#D4D4D4" stroke="#7F7F7F" stroke-width="1"/>
<rect x="540" y="334" width="4" height="1" fill="#7F7F7F"/>
<rect x="566.5" y="303.5" width="17.0" height="12.0" rx="0.6" fill="#D4D4D4" stroke="#7F7F7F" stroke-width="1"/>
<rect x="573" y="309" width="4" height="1" fill="#7F7F7F"/>
<rect x="586.5" y="303.5" width="16.0" height="12.0" rx="0.6" fill="#D4D4D4" stroke="#7F7F7F" stroke-width="1"/>
<rect x="592" y="309" width="4" height="1" fill="#7F7F7F"/>
<rect x="604.5" y="303.5" width="17.0" height="12.0" rx="0.6" fill="#D4D4D4" stroke="#7F7F7F" stroke-width="1"/>
<rect x="611" y="309" width="4" height="1" fill="#7F7F7F"/>
<rect x="566.5" y="318.5" width="36.0" height="13.0" rx="0.6" fill="#D4D4D4" stroke="#7F7F7F" stroke-width="1"/>
<rect x="582" y="324" width="4" height="1" fill="#7F7F7F"/>
<rect x="604.5" y="318.5" width="17.0" height="13.0" rx="0.6" fill="#D4D4D4" stroke="#7F7F7F" stroke-width="1"/>
<rect x="611" y="324" width="4" height="1" fill="#7F7F7F"/>
<rect x="566.5" y="333.5" width="55.0" height="12.0" rx="0.6" fill="#D4D4D4" stroke="#7F7F7F" stroke-width="1"/>
<rect x="592" y="339" width="4" height="1" fill="#7F7F7F"/>
<rect x="645.5" y="304.5" width="8.0" height="41.0" rx="0" fill="#D4D4D4" stroke="#7F7F7F" stroke-width="1"/>
<rect x="649" y="322.5" width="1" height="4" fill="#7F7F7F"/>
<path d="M653.5 324.5 L657.5 324.5" fill="none" stroke="#7F7F7F" stroke-width="1"/>
<path d="M660.5 313.5 L657.5 313.5 L657.5 335.5 L660.5 335.5" fill="none" stroke="#7F7F7F" stroke-width="1"/>
<rect x="660.5" y="309.5" width="26.0" height="8.0" rx="0" fill="#D4D4D4" stroke="#7F7F7F" stroke-width="1"/>
<rect x="672" y="313" width="4" height="1" fill="#7F7F7F"/>
<rect x="660.5" y="320.5" width="26.0" height="8.0" rx="0" fill="#D4D4D4" stroke="#7F7F7F" stroke-width="1"/>
<rect x="672" y="324" width="4" height="1" fill="#7F7F7F"/>
<rect x="660.5" y="331.5" width="26.0" height="8.0" rx="0" fill="#D4D4D4" stroke="#7F7F7F" stroke-width="1"/>
<rect x="672" y="335" width="4" height="1" fill="#7F7F7F"/>
<path d="M724.5 325.5 L730.5 318.5" fill="none" stroke="#7F7F7F" stroke-width="1"/>
<path d="M724.5 330.5 L730.5 336.5" fill="none" stroke="#7F7F7F" stroke-width="1"/>
<path d="M744.5 316.5 L750.5 312.5" fill="none" stroke="#7F7F7F" stroke-width="1"/>
<path d="M744.5 320.5 L750.5 324.5" fill="none" stroke="#7F7F7F" stroke-width="1"/>
<path d="M744.5 336.5 L750.5 336.5" fill="none" stroke="#7F7F7F" stroke-width="1"/>
<rect x="711.5" y="322.5" width="13.0" height="9.0" rx="0.6" fill="#D4D4D4" stroke="#7F7F7F" stroke-width="1"/>
<rect x="716" y="326" width="4" height="1" fill="#7F7F7F"/>
<rect x="730.5" y="314.5" width="13.0" height="8.0" rx="0.6" fill="#D4D4D4" stroke="#7F7F7F" stroke-width="1"/>
<rect x="735" y="318" width="4" height="1" fill="#7F7F7F"/>
<rect x="730.5" y="331.5" width="13.0" height="9.0" rx="0.6" fill="#D4D4D4" stroke="#7F7F7F" stroke-width="1"/>
<rect x="735" y="336" width="4" height="1" fill="#7F7F7F"/>
<rect x="750.5" y="307.5" width="13.0" height="9.0" rx="0.6" fill="#D4D4D4" stroke="#7F7F7F" stroke-width="1"/>
<rect x="755" y="312" width="4" height="1" fill="#7F7F7F"/>
<rect x="750.5" y="319.5" width="13.0" height="9.0" rx="0.6" fill="#D4D4D4" stroke="#7F7F7F" stroke-width="1"/>
<rect x="755" y="324" width="4" height="1" fill="#7F7F7F"/>
<rect x="750.5" y="332.5" width="13.0" height="8.0" rx="0.6" fill="#D4D4D4" stroke="#7F7F7F" stroke-width="1"/>
<rect x="755" y="336" width="4" height="1" fill="#7F7F7F"/>
<rect x="497.5" y="359.5" width="14.0" height="43.0" rx="0.6" fill="#fff" stroke="#7F7F7F" stroke-width="1"/>
<rect x="502" y="364" width="5" height="1" fill="#7F7F7F"/>
<rect x="514.5" y="359.5" width="15.0" height="43.0" rx="0.6" fill="#fff" stroke="#7F7F7F" stroke-width="1"/>
<rect x="520" y="364" width="5" height="1" fill="#7F7F7F"/>
<rect x="531.5" y="359.5" width="15.0" height="43.0" rx="0.6" fill="#fff" stroke="#7F7F7F" stroke-width="1"/>
<rect x="536" y="364" width="5" height="1" fill="#7F7F7F"/>
<path d="M510.5 388.5 L513.5 388.5" fill="none" stroke="#7F7F7F" stroke-width="1"/>
<path d="M513.5 380.5 L513.5 396.5" fill="none" stroke="#7F7F7F" stroke-width="1"/>
<path d="M513.5 380.5 L516.5 380.5" fill="none" stroke="#7F7F7F" stroke-width="1"/>
<path d="M513.5 396.5 L516.5 396.5" fill="none" stroke="#7F7F7F" stroke-width="1"/>
<path d="M527.5 380.5 L530.5 380.5" fill="none" stroke="#7F7F7F" stroke-width="1"/>
<path d="M527.5 396.5 L533.5 396.5" fill="none" stroke="#7F7F7F" stroke-width="1"/>
<path d="M530.5 374.5 L530.5 385.5" fill="none" stroke="#7F7F7F" stroke-width="1"/>
<path d="M530.5 374.5 L533.5 374.5" fill="none" stroke="#7F7F7F" stroke-width="1"/>
<path d="M530.5 385.5 L533.5 385.5" fill="none" stroke="#7F7F7F" stroke-width="1"/>
<rect x="500.5" y="385.5" width="9.0" height="6.0" rx="0.6" fill="#D4D4D4" stroke="#7F7F7F" stroke-width="1"/>
<rect x="503" y="388" width="4" height="1" fill="#7F7F7F"/>
<rect x="516.5" y="376.5" width="10.0" height="7.0" rx="0.6" fill="#D4D4D4" stroke="#7F7F7F" stroke-width="1"/>
<rect x="520" y="380" width="4" height="1" fill="#7F7F7F"/>
<rect x="516.5" y="392.5" width="10.0" height="7.0" rx="0.6" fill="#D4D4D4" stroke="#7F7F7F" stroke-width="1"/>
<rect x="520" y="396" width="4" height="1" fill="#7F7F7F"/>
<rect x="534.5" y="370.5" width="9.0" height="7.0" rx="0.6" fill="#D4D4D4" stroke="#7F7F7F" stroke-width="1"/>
<rect x="537" y="374" width="4" height="1" fill="#7F7F7F"/>
<rect x="534.5" y="382.5" width="9.0" height="6.0" rx="0.6" fill="#D4D4D4" stroke="#7F7F7F" stroke-width="1"/>
<rect x="537" y="385" width="4" height="1" fill="#7F7F7F"/>
<rect x="534.5" y="392.5" width="9.0" height="7.0" rx="0.6" fill="#D4D4D4" stroke="#7F7F7F" stroke-width="1"/>
<rect x="537" y="396" width="4" height="1" fill="#7F7F7F"/>
<path d="M567.5 371.5 L567.5 395.5 L570.5 395.5" fill="none" stroke="#7F7F7F" stroke-width="1"/>
<path d="M567.5 380.5 L570.5 380.5" fill="none" stroke="#7F7F7F" stroke-width="1"/>
<rect x="566.5" y="359.5" width="24.0" height="11.0" rx="0.6" fill="#D4D4D4" stroke="#7F7F7F" stroke-width="1"/>
<rect x="576" y="364" width="4" height="1" fill="#7F7F7F"/>
<rect x="570.5" y="374.5" width="20.0" height="11.0" rx="0.6" fill="#fff" stroke="#7F7F7F" stroke-width="1"/>
<rect x="578" y="380" width="4" height="1" fill="#7F7F7F"/>
<rect x="570.5" y="389.5" width="20.0" height="11.0" rx="0.6" fill="#fff" stroke="#7F7F7F" stroke-width="1"/>
<rect x="578" y="394" width="4" height="1" fill="#7F7F7F"/>
<path d="M597.5 371.5 L597.5 395.5 L600.5 395.5" fill="none" stroke="#7F7F7F" stroke-width="1"/>
<path d="M597.5 380.5 L600.5 380.5" fill="none" stroke="#7F7F7F" stroke-width="1"/>
<rect x="596.5" y="359.5" width="23.0" height="11.0" rx="0.6" fill="#D4D4D4" stroke="#7F7F7F" stroke-width="1"/>
<rect x="606" y="364" width="4" height="1" fill="#7F7F7F"/>
<rect x="600.5" y="374.5" width="19.0" height="11.0" rx="0.6" fill="#fff" stroke="#7F7F7F" stroke-width="1"/>
<rect x="608" y="380" width="4" height="1" fill="#7F7F7F"/>
<rect x="600.5" y="389.5" width="19.0" height="11.0" rx="0.6" fill="#fff" stroke="#7F7F7F" stroke-width="1"/>
<rect x="608" y="394" width="4" height="1" fill="#7F7F7F"/>
<rect x="638" y="359" width="56" height="2" fill="#7F7F7F"/>
<rect x="640" y="365" width="6" height="1" fill="#7F7F7F"/>
<rect x="652" y="366" width="7" height="1" fill="#7F7F7F"/>
<rect x="652" y="381" width="7" height="1" fill="#7F7F7F"/>
<rect x="652" y="395" width="7" height="1" fill="#7F7F7F"/>
<rect x="649" y="372.9" width="45" height="1" fill="#7F7F7F"/>
<rect x="649" y="387.8" width="45" height="1" fill="#7F7F7F"/>
<rect x="649" y="400.9" width="45" height="1" fill="#7F7F7F"/>
<path d="M339.5 190.5 L350 190.5 L353.5 194.5 L350 198.5 L339.5 198.5 L342.5 194.5 Z" fill="#C8C8C8" stroke="#606060" stroke-width="1"/>
<rect x="346.5" y="196.5" width="8" height="7.5" fill="#fff" stroke="#606060" stroke-width="1"/>
<path d="M348 198.5 h1 M350 198.5 h3 M348 200.5 h1 M350 200.5 h3 M348 202.5 h1 M350 202.5 h3" stroke="#606060" stroke-width="0.8"/>
<rect x="339.5" y="214.5" width="3.5" height="3.5" fill="#fff" stroke="#606060" stroke-width="1"/>
<rect x="344.5" y="214.5" width="10.5" height="3.5" fill="#C8C8C8" stroke="#606060" stroke-width="1"/>
<rect x="339.5" y="219.7" width="3.5" height="3.5" fill="#fff" stroke="#606060" stroke-width="1"/>
<rect x="344.5" y="219.7" width="10.5" height="3.5" fill="#C8C8C8" stroke="#606060" stroke-width="1"/>
<rect x="339.5" y="224.9" width="3.5" height="3.5" fill="#fff" stroke="#606060" stroke-width="1"/>
<rect x="344.5" y="224.9" width="10.5" height="3.5" fill="#C8C8C8" stroke="#606060" stroke-width="1"/>
<path d="M339.3 242.8 L341.5 242.8 L341.5 241.2 L344.5 244.3 L341.5 247.4 L341.5 245.8 L339.3 245.8 Z" fill="#fff" stroke="#606060" stroke-width="1.1"/>
<path d="M344.6 242.8 L346.8 242.8 L346.8 241.2 L349.8 244.3 L346.8 247.4 L346.8 245.8 L344.6 245.8 Z" fill="#fff" stroke="#606060" stroke-width="1.1"/>
<path d="M349.90000000000003 242.8 L352.1 242.8 L352.1 241.2 L355.1 244.3 L352.1 247.4 L352.1 245.8 L349.90000000000003 245.8 Z" fill="#fff" stroke="#606060" stroke-width="1.1"/>
<rect x="341.5" y="261.5" width="3.2" height="3.2" fill="#fff" stroke="#606060" stroke-width="1"/>
<rect x="351.5" y="269.5" width="3.2" height="3.2" fill="#fff" stroke="#606060" stroke-width="1"/>
<rect x="345" y="274.5" width="3.2" height="3.2" fill="#fff" stroke="#606060" stroke-width="1"/>
<path d="M347 263 L353 263 L353 267 M340 267 L340 270.5 L343 273.5 M350 276 L353 274" fill="none" stroke="#606060" stroke-width="1.4"/>
<path d="M351.5 266 L353 268 L354.5 266 Z M341.5 272 L343.5 274.5 L344 271.5 Z" fill="#606060"/>
<rect x="344.5" y="286.5" width="5.5" height="3.5" fill="none" stroke="#606060" stroke-width="1"/>
<path d="M347.2 290 L347.2 293 M341 295 L341 293 L353.5 293 L353.5 295 M347.2 293 L347.2 295" fill="none" stroke="#606060" stroke-width="1"/>
<rect x="339.5" y="295.5" width="4" height="3.5" fill="none" stroke="#606060" stroke-width="1"/>
<rect x="345" y="295.5" width="4" height="3.5" fill="none" stroke="#606060" stroke-width="1"/>
<rect x="350.5" y="295.5" width="4" height="3.5" fill="none" stroke="#606060" stroke-width="1"/>
<rect x="339.5" y="310.5" width="15.5" height="13.5" fill="#fff" stroke="#606060" stroke-width="1"/>
<rect x="340" y="317" width="14.5" height="6.5" fill="#D0D0D0"/>
<path d="M339.5 317 L355 317 M343 316 L343 312 M341.5 313.5 L343 312 L344.5 313.5 M351.5 318 L351.5 322.5 M350 321 L351.5 322.5 L353 321" fill="none" stroke="#606060" stroke-width="0.9"/>
<path d="M343.5 333.8 L349 333.8 Q350.5 333.8 350.5 335.3 L350.5 337.3 L352 337.3 Q353.5 337.3 353.5 338.8 L353.5 344 Q353.5 345.5 352 345.5 L350.5 345.5 L350.5 347.5 Q350.5 349 349 349 L343.5 349 Q342 349 342 347.5 L342 345.5 L340.5 345.5 Q339 345.5 339 344 L339 338.8 Q339 337.3 340.5 337.3 L342 337.3 L342 335.3 Q342 333.8 343.5 333.8 Z" fill="#C8C8C8" stroke="#606060" stroke-width="1.3"/>
<path d="M346.2 334.5 L346.2 348.3 M339.8 341.4 L352.8 341.4" stroke="#fff" stroke-width="2"/>
<path d="M346.5 356.8 L348 356.8 L355 371.5 L339.5 371.5 Z" fill="#B8B8B8" stroke="#606060" stroke-width="1.1"/>
<path d="M342.6 361.2 L351.9 361.2 M341.5 364.7 L353 364.7 M340.4 368.2 L354.1 368.2" stroke="#fff" stroke-width="1"/>
<rect x="340.5" y="382.5" width="13" height="13" fill="#fff" stroke="#606060" stroke-width="1.1"/>
<path d="M342 394.5 L342 391 L345.5 387.5 L350 392 L349 394.5 Z M348.3 389.5 L349.5 388.5 L352.5 391.5 L352.5 394.5 L351.5 394.5 Z" fill="#606060"/>
<circle cx="349.8" cy="385.3" r="1.3" fill="#A0A0A0"/>
<circle cx="346.5" cy="412.2" r="6.8" fill="none" stroke="#606060" stroke-width="1.2"/>
<ellipse cx="346.5" cy="412.2" rx="2.9" ry="6.8" fill="none" stroke="#606060" stroke-width="1.1"/>
<path d="M339.7 412.2 L353.3 412.2 M340.5 409 L352.5 409 M340.5 415.4 L352.5 415.4" stroke="#606060" stroke-width="1"/>
<rect x="831" y="189.3" width="83" height="49.5" fill="url(#go)" filter="url(#sh)"/>
<rect x="861.5" y="213.0" width="22" height="2" fill="#fff"/>
<rect x="923" y="189.3" width="83" height="49.5" fill="url(#gg)" filter="url(#sh)"/>
<rect x="953.5" y="213.0" width="22" height="2" fill="#fff"/>
<rect x="831" y="247.5" width="83" height="49.5" fill="url(#gy)" filter="url(#sh)"/>
<rect x="861.5" y="271.2" width="22" height="2" fill="#fff"/>
<rect x="923" y="247.5" width="83" height="49.5" fill="url(#gb)" filter="url(#sh)"/>
<rect x="953.5" y="271.2" width="22" height="2" fill="#fff"/>
<rect x="877" y="306.2" width="83" height="49.5" fill="url(#gn)" filter="url(#sh)"/>
<rect x="907.5" y="329.9" width="22" height="2" fill="#fff"/>
<path d="M1015.5 146 L1025 155.5 M1025 146 L1015.5 155.5" stroke="#111" stroke-width="1.1"/></svg>
<div class="tx" style="left:16.50px;top:11.00px;font-size:12.5px;color:#FFFFFF;letter-spacing:-0.500px">File</div>
<div class="tx" style="left:69.30px;top:11.00px;font-size:12.5px;color:#FFFFFF;letter-spacing:0.133px">Home</div>
<div class="tx" style="left:129.80px;top:11.00px;font-size:12.5px;color:#B7472A;letter-spacing:-0.420px">Insert</div>
<div class="tx" style="left:185.50px;top:11.00px;font-size:12.5px;color:#FFFFFF;letter-spacing:-0.500px">Design</div>
<div class="tx" style="left:249.40px;top:11.00px;font-size:12.5px;color:#FFFFFF;letter-spacing:-0.470px">Transitions</div>
<div class="tx" style="left:332.00px;top:11.00px;font-size:12.5px;color:#FFFFFF;letter-spacing:-0.022px">Animations</div>
<div class="tx" style="left:419.30px;top:11.00px;font-size:12.5px;color:#FFFFFF;letter-spacing:-0.633px">Slide Show</div>
<div class="tx" style="left:503.50px;top:11.00px;font-size:12.5px;color:#FFFFFF;letter-spacing:-0.760px">Review</div>
<div class="tx" style="left:568.00px;top:11.00px;font-size:12.5px;color:#FFFFFF;letter-spacing:-0.800px">View</div>
<div class="tx" style="left:619.50px;top:11.00px;font-size:12.5px;color:#FFFFFF;letter-spacing:-0.100px">Help</div>
<div class="tx" style="left:701.30px;top:11.00px;font-size:12.5px;color:#FBE3DB;letter-spacing:-0.212px">Tell me what you want to do</div>
<div class="tx" style="left:1309.30px;top:11.00px;font-size:12.5px;color:#FFFFFF;letter-spacing:-0.825px">Share</div>
<div class="tx" style="left:13.30px;top:74.80px;font-size:12px;color:#262626;letter-spacing:0.300px">New</div>
<div class="tx" style="left:8.20px;top:90.90px;font-size:12px;color:#262626;letter-spacing:0.075px">Slide</div>
<div class="tx" style="left:70.00px;top:74.80px;font-size:12px;color:#262626;letter-spacing:-0.275px">Table</div>
<div class="tx" style="left:122.30px;top:74.80px;font-size:12px;color:#262626;letter-spacing:-0.086px">Pictures</div>
<div class="tx" style="left:169.00px;top:74.80px;font-size:12px;color:#262626;letter-spacing:-0.244px">Screenshot</div>
<div class="tx" style="left:238.60px;top:74.80px;font-size:12px;color:#262626;letter-spacing:0.300px">Photo</div>
<div class="tx" style="left:233.40px;top:90.90px;font-size:12px;color:#262626;letter-spacing:0.775px">Album</div>
<div class="tx" style="left:297.00px;top:74.80px;font-size:12px;color:#262626;letter-spacing:-0.400px">Shapes</div>
<div class="tx" style="left:344.50px;top:74.80px;font-size:12px;color:#262626;letter-spacing:0.075px">Icons</div>
<div class="tx" style="left:397.50px;top:74.80px;font-size:12px;color:#262626;letter-spacing:-0.100px">3D</div>
<div class="tx" style="left:381.60px;top:90.90px;font-size:12px;color:#262626;letter-spacing:0.380px">Models</div>
<div class="tx" style="left:433.40px;top:74.80px;font-size:12px;color:#262626;letter-spacing:0.043px">SmartArt</div>
<div class="tx" style="left:490.30px;top:74.80px;font-size:12px;color:#262626;letter-spacing:-0.025px">Chart</div>
<div class="tx" style="left:563.70px;top:48.80px;font-size:12px;color:#262626;letter-spacing:0.120px">Get Add-ins</div>
<div class="tx" style="left:563.40px;top:79.80px;font-size:12px;color:#262626;letter-spacing:0.367px">My Add-ins</div>
<div class="tx" style="left:667.30px;top:74.80px;font-size:12px;color:#262626;letter-spacing:0.500px">Zoom</div>
<div class="tx" style="left:713.70px;top:74.80px;font-size:12px;color:#A6A6A6;letter-spacing:-0.233px">Link</div>
<div class="tx" style="left:749.00px;top:74.80px;font-size:12px;color:#A6A6A6;letter-spacing:0.260px">Action</div>
<div class="tx" style="left:805.00px;top:74.80px;font-size:12px;color:#262626;letter-spacing:0.433px">Comment</div>
<div class="tx" style="left:889.80px;top:74.80px;font-size:12px;color:#262626;letter-spacing:-0.833px">Text</div>
<div class="tx" style="left:889.30px;top:90.90px;font-size:12px;color:#262626;letter-spacing:-0.800px">Box</div>
<div class="tx" style="left:927.20px;top:74.80px;font-size:12px;color:#262626;letter-spacing:-0.120px">Header</div>
<div class="tx" style="left:923.20px;top:90.90px;font-size:12px;color:#262626;letter-spacing:0.114px">&amp; Footer</div>
<div class="tx" style="left:974.80px;top:74.80px;font-size:12px;color:#262626;letter-spacing:0.100px">WordArt</div>
<div class="tx" style="left:1062.00px;top:74.80px;font-size:12px;color:#262626;letter-spacing:0.029px">Equation</div>
<div class="tx" style="left:1114.70px;top:74.80px;font-size:12px;color:#A6A6A6;letter-spacing:0.160px">Symbol</div>
<div class="tx" style="left:1179.60px;top:74.80px;font-size:12px;color:#262626;letter-spacing:-0.050px">Video</div>
<div class="tx" style="left:1221.00px;top:74.80px;font-size:12px;color:#262626;letter-spacing:0.300px">Audio</div>
<div class="tx" style="left:1269.30px;top:74.80px;font-size:12px;color:#262626;letter-spacing:-0.320px">Screen</div>
<div class="tx" style="left:1259.70px;top:90.90px;font-size:12px;color:#262626;letter-spacing:-0.025px">Recording</div>
<div class="tx" style="left:9.40px;top:110.50px;font-size:11.2px;color:#262626;letter-spacing:0.040px">Slides</div>
<div class="tx" style="left:67.00px;top:110.50px;font-size:11.2px;color:#262626;letter-spacing:-0.080px">Tables</div>
<div class="tx" style="left:181.30px;top:110.50px;font-size:11.2px;color:#262626;letter-spacing:0.060px">Images</div>
<div class="tx" style="left:379.40px;top:110.50px;font-size:11.2px;color:#262626;letter-spacing:0.458px">Illustrations</div>
<div class="tx" style="left:573.30px;top:110.50px;font-size:11.2px;color:#262626;letter-spacing:0.167px">Add-ins</div>
<div class="tx" style="left:710.90px;top:110.50px;font-size:11.2px;color:#262626;letter-spacing:-0.125px">Links</div>
<div class="tx" style="left:805.70px;top:110.50px;font-size:11.2px;color:#262626;letter-spacing:-0.086px">Comments</div>
<div class="tx" style="left:951.00px;top:110.50px;font-size:11.2px;color:#262626;letter-spacing:-0.467px">Text</div>
<div class="tx" style="left:1087.20px;top:110.50px;font-size:11.2px;color:#262626;letter-spacing:-0.083px">Symbols</div>
<div class="tx" style="left:1228.60px;top:110.50px;font-size:11.2px;color:#262626;letter-spacing:0.525px">Media</div>
<div class="tx" style="left:971.40px;top:143.90px;font-size:13.5px;color:#000;letter-spacing:-0.500px">?</div>
<div class="tx" style="left:162.25px;top:36.75px;font-size:19.5px;color:#D0161C;letter-spacing:1.750px;font-weight:700;font-family:&quot;Liberation Serif&quot;,serif">1</div>
<div class="tx" style="left:458.80px;top:98.00px;font-size:17.2px;color:#D0161C;letter-spacing:1.800px;font-weight:700">2</div>
<div class="tx" style="left:298.75px;top:283.20px;font-size:17px;color:#D0161C;letter-spacing:0.150px;font-weight:700">3</div>
<div class="tx" style="left:9.20px;top:142.90px;font-size:13px;color:#C55A3A;letter-spacing:-0.500px">1</div>
<div class="tx" style="left:325.50px;top:144.60px;font-size:12.3px;color:#000;letter-spacing:-0.321px">Choose a SmartArt Graphic</div>
<div class="tx" style="left:367.40px;top:190.00px;font-size:12.3px;color:#3C3C3C;letter-spacing:-0.200px">All</div>
<div class="tx" style="left:366.40px;top:214.00px;font-size:12.3px;color:#3C3C3C;letter-spacing:-0.167px">List</div>
<div class="tx" style="left:366.40px;top:238.00px;font-size:12.3px;color:#3C3C3C;letter-spacing:-0.667px">Process</div>
<div class="tx" style="left:366.40px;top:262.00px;font-size:12.3px;color:#3C3C3C;letter-spacing:-0.100px">Cycle</div>
<div class="tx" style="left:366.40px;top:286.00px;font-size:12.3px;color:#262626;letter-spacing:-0.175px">Hierarchy</div>
<div class="tx" style="left:366.40px;top:310.00px;font-size:12.3px;color:#3C3C3C;letter-spacing:-0.218px">Relationship</div>
<div class="tx" style="left:366.40px;top:334.00px;font-size:12.3px;color:#3C3C3C;letter-spacing:0.120px">Matrix</div>
<div class="tx" style="left:366.40px;top:358.00px;font-size:12.3px;color:#3C3C3C;letter-spacing:0.000px">Pyramid</div>
<div class="tx" style="left:366.40px;top:382.00px;font-size:12.3px;color:#3C3C3C;letter-spacing:-0.083px">Picture</div>
<div class="tx" style="left:366.40px;top:406.00px;font-size:12.3px;color:#3C3C3C;letter-spacing:0.100px">Office.com</div>
<div class="tx" style="left:814.50px;top:368.70px;font-size:10.5px;color:#404040;letter-spacing:-0.167px;font-weight:700">Basic Block List</div>
<div class="tx" style="left:813.80px;top:388.60px;font-size:10.5px;color:#555555;letter-spacing:0.681px">Use to show non-sequential or grouped</div>
<div class="tx" style="left:813.80px;top:401.50px;font-size:10.5px;color:#555555;letter-spacing:0.597px">blocks of information. Maximizes both</div>
<div class="tx" style="left:813.80px;top:414.40px;font-size:10.5px;color:#555555;letter-spacing:0.495px">horizontal and vertical display space for</div>
<div class="tx" style="left:814.80px;top:427.30px;font-size:10.5px;color:#555555;letter-spacing:0.317px">shapes.</div>
<div class="tx" style="left:908.50px;top:500.00px;font-size:10.3px;color:#000;letter-spacing:-0.600px">OK</div>
<div class="tx" style="left:981.70px;top:499.00px;font-size:11.2px;color:#000;letter-spacing:0.000px">Cancel</div>
<div class="tx" style="left:3.40px;top:679.90px;font-size:11.5px;color:#262626;letter-spacing:-0.018px">Slide 1 of 1</div>
<div class="tx" style="left:111.70px;top:679.90px;font-size:11.5px;color:#262626;letter-spacing:-0.036px">English (India)</div>
<div class="tx" style="left:864.40px;top:679.90px;font-size:11.5px;color:#262626;letter-spacing:0.000px">Notes</div>
<div class="tx" style="left:931.50px;top:679.90px;font-size:11.5px;color:#262626;letter-spacing:-0.157px">Comments</div>
<div class="tx" style="left:1309.00px;top:679.90px;font-size:11.5px;color:#262626;letter-spacing:-0.400px">72%</div>
</body></html>
